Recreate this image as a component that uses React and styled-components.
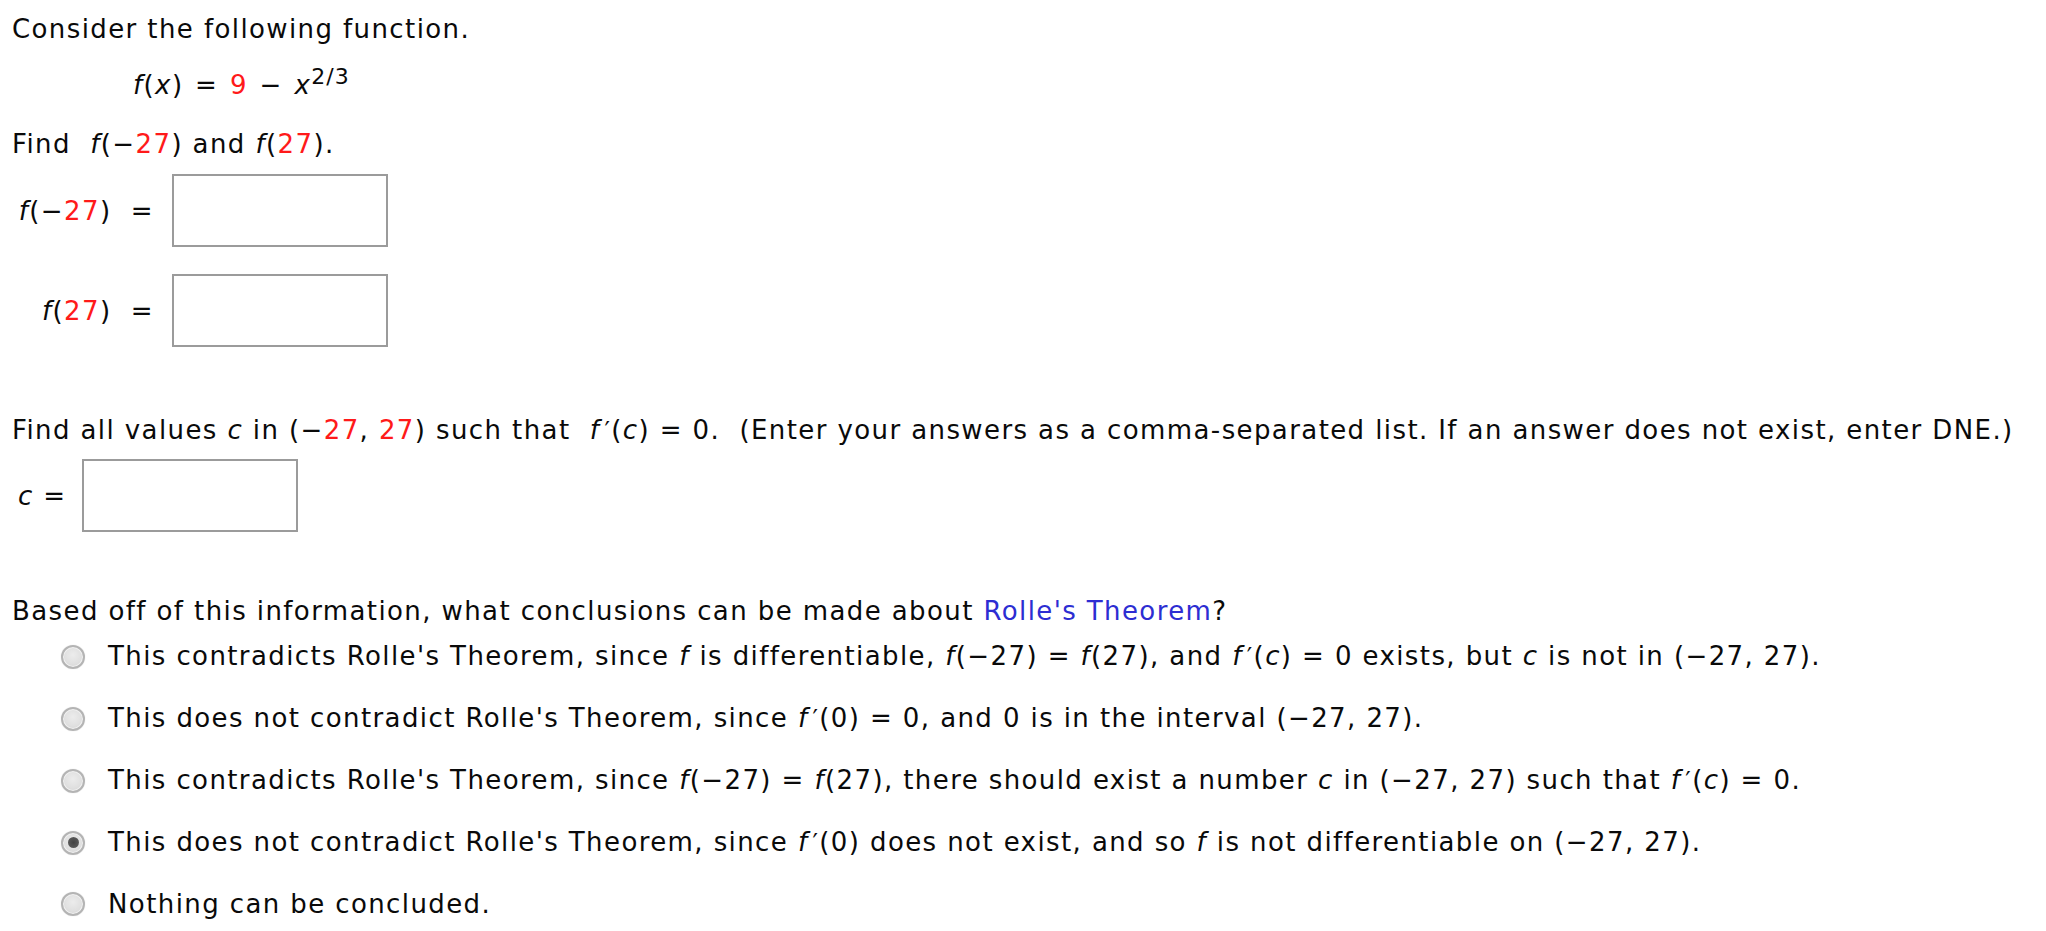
import React from "react";
import styled, { createGlobalStyle } from "styled-components";

const GlobalStyle = createGlobalStyle`
  html, body { margin: 0; padding: 0; background: #ffffff; }
  body {
    font-family: "DejaVu Sans", Verdana, "Liberation Sans", sans-serif;
    font-size: 26px;
    letter-spacing: 1.4px;
    color: #0a0a0a;
  }
`;

const Page = styled.div`
  display: flex;
  flex-direction: column;
  align-items: flex-start;
  padding: 14px 13px 20px 12px;
`;

const Line = styled.div`
  margin: ${(p) => p.$mt || 0}px 0 0 ${(p) => p.$indent || 0}px;
  line-height: 30px;
  white-space: nowrap;
`;

const Red = styled.span`
  color: #ff1a1a;
`;

const Var = styled.i`
  font-style: italic;
`;

const Prime = styled.span`
  display: inline-block;
  margin-left: 4px;
  font-size: 24px;
`;

const Gap = styled.span`
  display: inline-block;
  width: ${(p) => p.$w || 6}px;
`;

const Sup = styled.sup`
  font-size: 22px;
  line-height: 0;
  vertical-align: 10px;
  letter-spacing: 1px;
`;

const Link = styled.span`
  color: #2d2dd2;
`;

const AnswerGrid = styled.div`
  display: grid;
  grid-template-columns: 142px 216px;
  column-gap: 18px;
  row-gap: 27px;
  align-items: center;
  margin-top: ${(p) => p.$mt || 0}px;
`;

const Label = styled.div`
  justify-self: end;
  line-height: 30px;
  white-space: nowrap;
`;

const AnswerBox = styled.div`
  box-sizing: border-box;
  width: 216px;
  height: 73px;
  border: 2px solid #9b9b9b;
  background: #ffffff;
`;

const InlineAnswer = styled.div`
  display: flex;
  align-items: center;
  gap: 15px;
  margin-top: ${(p) => p.$mt || 0}px;
  padding-left: 6px;
  line-height: 30px;
`;

const Options = styled.div`
  display: flex;
  flex-direction: column;
  gap: 31px;
  margin-top: ${(p) => p.$mt || 0}px;
  padding-left: 49px;
`;

const Option = styled.label`
  display: flex;
  align-items: center;
  gap: 23px;
  line-height: 30px;
  white-space: nowrap;
`;

const Radio = styled.span`
  position: relative;
  flex: none;
  box-sizing: border-box;
  width: 24px;
  height: 24px;
  border-radius: 50%;
  border: 2px solid #b4b4b4;
  background: radial-gradient(circle at 50% 40%, #ececec 0%, #e0e0e0 55%, #d8d8d8 78%, #eeeeee 100%);
  box-shadow: inset 0 0 0 1px #f2f2f2, 0 0 1px #cfcfcf;

  &::after {
    content: "";
    display: ${(p) => (p.$checked ? "block" : "none")};
    position: absolute;
    left: 50%;
    top: 50%;
    width: 11px;
    height: 11px;
    margin: -5.5px 0 0 -5.5px;
    border-radius: 50%;
    background: radial-gradient(circle, #444444 0%, #555555 60%, #777777 100%);
  }
`;

const F = () => <Var>f</Var>;
const FP = () => (
  <>
    <Var>f</Var>
    <Prime>′</Prime>
  </>
);

export default function App() {
  return (
    <>
      <GlobalStyle />
      <Page>
        <Line>Consider the following function.</Line>
        <Line $mt={26} $indent={121}>
          <F />(<Var>x</Var>)<Gap $w={2} /> = <Gap $w={2} />
          <Red>9</Red> <Gap $w={2} />− <Gap $w={2} />
          <Var>x</Var>
          <Sup>2/3</Sup>
        </Line>
        <Line $mt={29}>
          Find&nbsp; <F />(−<Red>27</Red>) and <F />(<Red>27</Red>).
        </Line>

        <AnswerGrid $mt={15}>
          <Label>
            <F />(−<Red>27</Red>)&nbsp; =
          </Label>
          <AnswerBox />
          <Label>
            <F />(<Red>27</Red>)&nbsp; =
          </Label>
          <AnswerBox />
        </AnswerGrid>

        <Line $mt={68}>
          Find all values <Var>c</Var> in (−<Red>27</Red>, <Red>27</Red>) such that&nbsp; <FP />(<Var>c</Var>) = 0.&nbsp; (Enter
          your answers as a comma-separated list. If an answer does not exist, enter DNE.)
        </Line>
        <InlineAnswer $mt={13}>
          <span>
            <Var>c</Var> =
          </span>
          <AnswerBox />
        </InlineAnswer>

        <Line $mt={64}>
          Based off of this information, what conclusions can be made about <Link>Rolle's Theorem</Link>?
        </Line>
        <Options $mt={15}>
          <Option>
            <Radio />
            <span>
              This contradicts Rolle's Theorem, since <F /> is differentiable, <F />(−27) = <F />(27), and <FP />(
              <Var>c</Var>) = 0 exists, but <Var>c</Var> is not in (−27, 27).
            </span>
          </Option>
          <Option>
            <Radio />
            <span>
              This does not contradict Rolle's Theorem, since <FP />(0) = 0, and 0 is in the interval (−27, 27).
            </span>
          </Option>
          <Option>
            <Radio />
            <span>
              This contradicts Rolle's Theorem, since <F />(−27) = <F />(27), there should exist a number <Var>c</Var> in
              (−27, 27) such that <FP />(<Var>c</Var>) = 0.
            </span>
          </Option>
          <Option>
            <Radio $checked />
            <span>
              This does not contradict Rolle's Theorem, since <FP />(0) does not exist, and so <F /> is not differentiable
              on (−27, 27).
            </span>
          </Option>
          <Option>
            <Radio />
            <span>Nothing can be concluded.</span>
          </Option>
        </Options>
      </Page>
    </>
  );
}
